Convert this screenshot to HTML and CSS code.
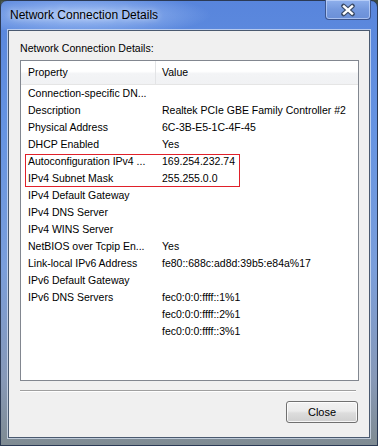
FILE: index.html
```html
<!DOCTYPE html>
<html>
<head>
<meta charset="utf-8">
<link rel="stylesheet" href="styles.css">
</head>
<body>
<div class="window">
  <div class="titlebar">
    <div class="title">Network Connection Details</div>
    <div class="closebtn">
      <svg width="20" height="14" viewBox="0 0 20 14">
        <path d="M5.5 3 L14.5 11 M14.5 3 L5.5 11" stroke="#3a4a66" stroke-width="4.6" stroke-linecap="round"/>
        <path d="M6 3.4 L14 10.6 M14 3.4 L6 10.6" stroke="#ffffff" stroke-width="2.4" stroke-linecap="square"/>
      </svg>
    </div>
  </div>
  <div class="client">
    <div class="label">Network Connection Details:</div>
    <div class="list">
      <div class="header">
        <div class="hcol c1">Property</div>
        <div class="hcol c2">Value</div>
      </div>
      <div class="rows">
        <div class="row"><div class="c1">Connection-specific DN...</div><div class="c2"></div></div>
        <div class="row"><div class="c1">Description</div><div class="c2">Realtek PCIe GBE Family Controller #2</div></div>
        <div class="row"><div class="c1">Physical Address</div><div class="c2">6C-3B-E5-1C-4F-45</div></div>
        <div class="row"><div class="c1">DHCP Enabled</div><div class="c2">Yes</div></div>
        <div class="row"><div class="c1">Autoconfiguration IPv4 ...</div><div class="c2">169.254.232.74</div></div>
        <div class="row"><div class="c1">IPv4 Subnet Mask</div><div class="c2">255.255.0.0</div></div>
        <div class="row"><div class="c1">IPv4 Default Gateway</div><div class="c2"></div></div>
        <div class="row"><div class="c1">IPv4 DNS Server</div><div class="c2"></div></div>
        <div class="row"><div class="c1">IPv4 WINS Server</div><div class="c2"></div></div>
        <div class="row"><div class="c1">NetBIOS over Tcpip En...</div><div class="c2">Yes</div></div>
        <div class="row"><div class="c1">Link-local IPv6 Address</div><div class="c2">fe80::688c:ad8d:39b5:e84a%17</div></div>
        <div class="row"><div class="c1">IPv6 Default Gateway</div><div class="c2"></div></div>
        <div class="row"><div class="c1">IPv6 DNS Servers</div><div class="c2">fec0:0:0:ffff::1%1</div></div>
        <div class="row"><div class="c1"></div><div class="c2">fec0:0:0:ffff::2%1</div></div>
        <div class="row"><div class="c1"></div><div class="c2">fec0:0:0:ffff::3%1</div></div>
      </div>
      <div class="highlight"></div>
    </div>
    <div class="separator"></div>
    <div class="footer">
      <button class="btn">Close</button>
    </div>
  </div>
</div>
</body>
</html>
```
FILE: styles.css
```css
html, body {
  margin: 0;
  padding: 0;
  width: 378px;
  height: 446px;
  overflow: hidden;
  background: #3d4a3e;
}
.window {
  box-sizing: border-box;
  width: 378px;
  height: 446px;
  border: 1px solid #2b3a55;
  border-radius: 7px 7px 0 0;
  background: linear-gradient(180deg, #5885dc 0%, #6694e2 30%, #7a9edb 60%, #8799b8 85%, #7f8b92 100%);
  display: flex;
  flex-direction: column;
  font-family: "Liberation Sans", Arial, sans-serif;
  position: relative;
}
.titlebar {
  height: 29px;
  display: flex;
  align-items: flex-start;
  justify-content: space-between;
  background: radial-gradient(ellipse 130px 22px at 80px 14px, rgba(190,215,255,0.75), rgba(190,215,255,0) 100%);
}
.title {
  padding-left: 9px;
  padding-top: 7px;
  font-size: 12px;
  color: #000;
  text-shadow: 0 0 6px rgba(255,255,255,0.9);
}
.closebtn {
  width: 46px;
  height: 20px;
  margin-right: 6px;
  margin-top: -1px;
  box-sizing: border-box;
  border: 1px solid #3c5690;
  border-top: none;
  border-radius: 0 0 4px 4px;
  background: linear-gradient(180deg, #8fb0ec 0%, #7599de 50%, #6a8fd8 100%);
  box-shadow: inset 0 0 0 1px rgba(210,225,255,0.6);
  display: flex;
  align-items: center;
  justify-content: center;
}
.client {
  margin-left: 7px;
  width: 362px;
  height: 408px;
  box-sizing: border-box;
  border: 1px solid #4a5a70;
  box-shadow: 0 0 0 1px rgba(220,230,245,0.7);
  background: #f0f0f0;
  padding: 11px 11px 0 11px;
  display: flex;
  flex-direction: column;
}
.label {
  font-size: 10.6px;
  line-height: 13px;
  color: #000;
  height: 13px;
}
.list {
  margin-top: 5px;
  width: 339px;
  height: 321px;
  box-sizing: border-box;
  border: 1px solid #828790;
  background: #fff;
  position: relative;
  font-size: 10.5px;
  color: #000;
}
.header {
  display: flex;
  height: 24px;
  box-sizing: border-box;
  border-bottom: 1px solid #e5e5e5;
  background: linear-gradient(180deg, #ffffff 0%, #ffffff 45%, #f3f4f6 55%, #f1f2f4 100%);
}
.hcol {
  line-height: 23px;
}
.header .c1 {
  border-right: 1px solid #e3e4e6;
}
.c1 {
  box-sizing: border-box;
  width: 135px;
  padding-left: 7px;
  white-space: nowrap;
  overflow: hidden;
}
.c2 {
  padding-left: 6px;
  white-space: nowrap;
}
.row {
  display: flex;
  height: 17px;
  line-height: 17px;
}
.highlight {
  position: absolute;
  left: 4px;
  top: 93px;
  width: 215px;
  height: 33px;
  box-sizing: border-box;
  border: 1px solid #e0202a;
}
.separator {
  margin-top: 9px;
  width: 336px;
  height: 1px;
  background: #a0a0a0;
  border-bottom: 1px solid #ffffff;
}
.footer {
  display: flex;
  justify-content: flex-end;
  margin-top: 9px;
}
.btn {
  width: 72px;
  height: 22px;
  box-sizing: border-box;
  border: 1px solid #707070;
  border-radius: 3px;
  background: linear-gradient(180deg, #f2f2f2 0%, #ebebeb 45%, #dddddd 55%, #cfcfcf 100%);
  box-shadow: inset 0 0 0 1px rgba(255,255,255,0.8);
  font-family: "Liberation Sans", Arial, sans-serif;
  font-size: 11px;
  color: #000;
  padding: 0;
}
```
